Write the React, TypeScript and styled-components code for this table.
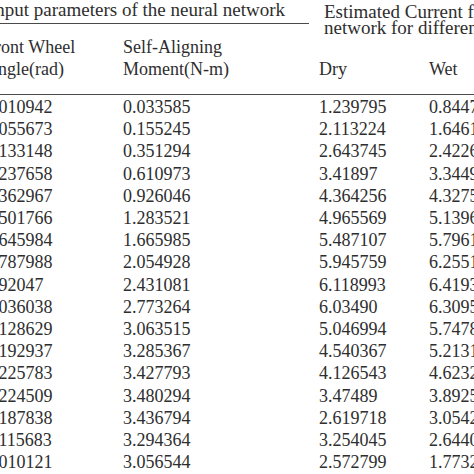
import React from "react";
import styled, { createGlobalStyle } from "styled-components";

const Global = createGlobalStyle`
  html, body {
    margin: 0;
    padding: 0;
    background: #ffffff;
  }
  body {
    width: 474px;
    height: 474px;
    overflow: hidden;
  }
`;

const COLS = "138px 196px 110px 111px 111px 111px";

const Page = styled.div`
  width: 474px;
  height: 474px;
  overflow: hidden;
  background: #ffffff;
  color: #2e2e2e;
  font-family: "Liberation Serif", "Times New Roman", serif;
  font-size: 18px;
`;

const Sheet = styled.div`
  margin-left: -15px;
  width: max-content;
  display: flex;
  flex-direction: column;
`;

const GroupRow = styled.div`
  display: grid;
  grid-template-columns: 334px 1fr;
  height: 36px;
`;

const InputHeader = styled.div`
  align-self: start;
  font-size: 19px;
  line-height: 20px;
  padding: 0 0 3px 4px;
  margin-right: 10px;
  border-bottom: 1px solid #4a4a4a;
  white-space: nowrap;
`;

const EstHeader = styled.div`
  padding: 4px 0 0 5px;
  font-size: 19px;
  line-height: 16px;
  white-space: nowrap;
`;

const SubRow = styled.div`
  display: grid;
  grid-template-columns: ${COLS};
  align-items: end;
  line-height: 22px;
  padding-bottom: 14px;
  border-bottom: 1px solid #4a4a4a;
`;

const HeadCell = styled.div`
  white-space: nowrap;
`;

const Body = styled.div`
  padding-top: 1px;
  display: flex;
  flex-direction: column;
`;

const Row = styled.div`
  display: grid;
  grid-template-columns: ${COLS};
  line-height: 22.2px;
`;

const Cell = styled.div`
  white-space: nowrap;
`;

const rows: string[][] = [
  ["0.010942", "0.033585", "1.239795", "0.844712", "0.612345", "0.401235"],
  ["0.055673", "0.155245", "2.113224", "1.646123", "1.203456", "0.812345"],
  ["0.133148", "0.351294", "2.643745", "2.422678", "1.843215", "1.243517"],
  ["0.237658", "0.610973", "3.41897", "3.344921", "2.512367", "1.712345"],
  ["0.362967", "0.926046", "4.364256", "4.327512", "3.213456", "2.201234"],
  ["0.501766", "1.283521", "4.965569", "5.139612", "3.845123", "2.612345"],
  ["0.645984", "1.665985", "5.487107", "5.796134", "4.312345", "2.945678"],
  ["0.787988", "2.054928", "5.945759", "6.255187", "4.712345", "3.201234"],
  ["0.92047", "2.431081", "6.118993", "6.419324", "4.845612", "3.312345"],
  ["1.036038", "2.773264", "6.03490", "6.309512", "4.756123", "3.245678"],
  ["1.128629", "3.063515", "5.046994", "5.747823", "4.312567", "2.956123"],
  ["1.192937", "3.285367", "4.540367", "5.213176", "3.912345", "2.678123"],
  ["1.225783", "3.427793", "4.126543", "4.623245", "3.467123", "2.378912"],
  ["1.224509", "3.480294", "3.47489", "3.892534", "2.923456", "2.001234"],
  ["1.187838", "3.436794", "2.619718", "3.054267", "2.289123", "1.567123"],
  ["1.115683", "3.294364", "3.254045", "2.644012", "1.983456", "1.356712"],
  ["1.010121", "3.056544", "2.572799", "1.773245", "1.329876", "0.912345"],
];

export default function App() {
  return (
    <Page>
      <Global />
      <Sheet>
        <GroupRow>
          <InputHeader>Input parameters of the neural network</InputHeader>
          <EstHeader>
            Estimated Current from the neural
            <br />
            network for different road conditions
          </EstHeader>
        </GroupRow>
        <SubRow>
          <HeadCell>
            Front Wheel
            <br />
            Angle(rad)
          </HeadCell>
          <HeadCell>
            Self-Aligning
            <br />
            Moment(N-m)
          </HeadCell>
          <HeadCell>Dry</HeadCell>
          <HeadCell>Wet</HeadCell>
          <HeadCell>Snow</HeadCell>
          <HeadCell>Ice</HeadCell>
        </SubRow>
        <Body>
          {rows.map((r, i) => (
            <Row key={i}>
              {r.map((v, j) => (
                <Cell key={j}>{v}</Cell>
              ))}
            </Row>
          ))}
        </Body>
      </Sheet>
    </Page>
  );
}
